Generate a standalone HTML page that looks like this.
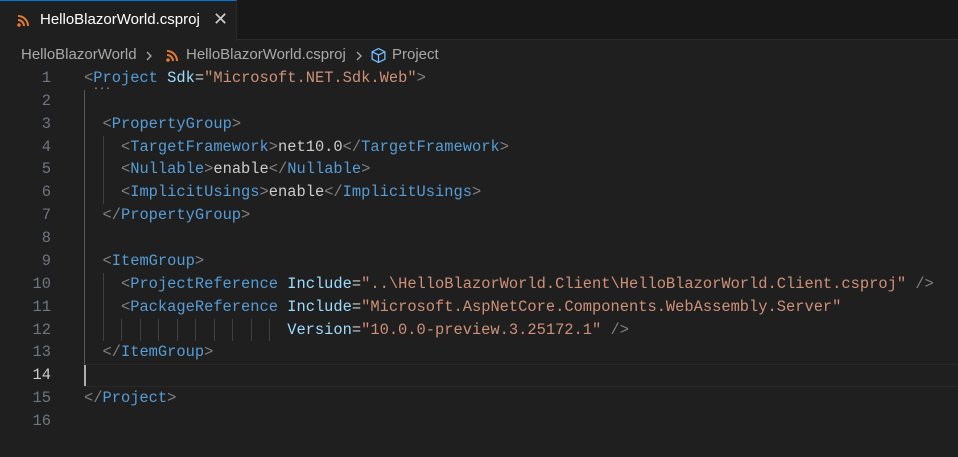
<!DOCTYPE html>
<html><head><meta charset="utf-8"><style>
body{margin:0;width:958px;height:457px;background:#1f1f1f;overflow:hidden;position:relative;font-family:"Liberation Sans",sans-serif}
.tabbar{position:absolute;left:0;top:0;width:958px;height:40px;background:#181818;border-bottom:1px solid #2b2b2b;box-sizing:border-box}
.tab{position:absolute;left:0;top:0;width:237px;height:41px;background:#1f1f1f;border-top:1px solid #0078d4;box-sizing:border-box;border-right:1px solid #2b2b2b}
.tab .t{position:absolute;left:40px;top:10px;color:#fff;font-size:15px}
.tab .x{position:absolute;left:213px;top:8px;color:#ccc;font-size:18px}
.bc{position:absolute;top:46px;color:#a9a9a9;font-size:15px;white-space:pre}
.code{position:absolute;left:0;top:67px;font-family:"Liberation Mono",monospace;font-size:15.4px}
.ln{position:absolute;left:0;width:51px;text-align:right;color:#6e7681;height:22.87px;line-height:22.87px}
.l{position:absolute;left:84px;white-space:pre;height:22.87px;line-height:22.87px;color:#cccccc}
.g{position:absolute;width:1px;background:#404040}
.p{color:#808080}.n{color:#569cd6}.a{color:#9cdcfe}.s{color:#ce9178}
</style></head><body>
<div class="tabbar"></div>
<div class="tab">
<svg style="position:absolute;left:17px;top:14px" width="12" height="12" viewBox="0 0 12 12"><circle cx="2" cy="10" r="1.8" fill="#e37933"/><path d="M1 5a6 6 0 0 1 6 6M1 1a10 10 0 0 1 10 10" stroke="#e37933" stroke-width="2" fill="none"/></svg>
<span class="t">HelloBlazorWorld.csproj</span><span class="x">✕</span></div>
<span class="bc" style="left:21px">HelloBlazorWorld</span>
<svg style="position:absolute;left:145px;top:50px" width="8" height="12" viewBox="0 0 8 12"><path d="M2 2l4 4-4 4" stroke="#a9a9a9" stroke-width="1.3" fill="none"/></svg>
<svg style="position:absolute;left:166px;top:50px" width="12" height="12" viewBox="0 0 12 12"><circle cx="2" cy="10" r="1.8" fill="#e37933"/><path d="M1 5a6 6 0 0 1 6 6M1 1a10 10 0 0 1 10 10" stroke="#e37933" stroke-width="2" fill="none"/></svg>
<span class="bc" style="left:186px">HelloBlazorWorld.csproj</span>
<svg style="position:absolute;left:355px;top:50px" width="8" height="12" viewBox="0 0 8 12"><path d="M2 2l4 4-4 4" stroke="#a9a9a9" stroke-width="1.3" fill="none"/></svg>
<svg style="position:absolute;left:370px;top:47px" width="17" height="17" viewBox="0 0 16 16"><path d="M8 1.5l6 3v7l-6 3-6-3v-7z M2 4.5l6 3 6-3 M8 7.5v7" stroke="#75beff" stroke-width="1.2" fill="none" stroke-linejoin="round"/></svg>
<span class="bc" style="left:392px">Project</span>
<div class="code">
<div style="position:absolute;left:84px;top:297.3px;width:874px;height:22.87px;box-sizing:border-box;border-top:1px solid #282828;border-bottom:1px solid #282828"></div>
<div class="g" style="left:84px;top:22.87px;height:274.4px;background:#585858"></div>
<div class="g" style="left:102.5px;top:68.6px;height:68.6px"></div>
<div class="g" style="left:102.5px;top:205.8px;height:68.6px"></div>
<div class="g" style="left:121px;top:251.6px;height:22.87px"></div>
<div class="g" style="left:139.5px;top:251.6px;height:22.87px"></div>
<div class="g" style="left:158px;top:251.6px;height:22.87px"></div>
<div class="g" style="left:176.5px;top:251.6px;height:22.87px"></div>
<div class="g" style="left:195px;top:251.6px;height:22.87px"></div>
<div class="g" style="left:213.5px;top:251.6px;height:22.87px"></div>
<div class="g" style="left:232px;top:251.6px;height:22.87px"></div>
<div class="g" style="left:250.5px;top:251.6px;height:22.87px"></div>
<div class="g" style="left:269px;top:251.6px;height:22.87px"></div>
<div class="ln" style="top:0">1</div><div class="l" style="top:0"><span class="p">&lt;</span><span class="n">Project</span> <span class="a">Sdk</span>=<span class="s">"Microsoft.NET.Sdk.Web"</span><span class="p">&gt;</span></div>
<div style="position:absolute;left:93px;top:17px;color:#aaa;font-size:10px;letter-spacing:0">···</div>
<div class="ln" style="top:22.87px">2</div>
<div class="ln" style="top:45.74px">3</div><div class="l" style="top:45.74px">  <span class="p">&lt;</span><span class="n">PropertyGroup</span><span class="p">&gt;</span></div>
<div class="ln" style="top:68.61px">4</div><div class="l" style="top:68.61px">    <span class="p">&lt;</span><span class="n">TargetFramework</span><span class="p">&gt;</span>net10.0<span class="p">&lt;/</span><span class="n">TargetFramework</span><span class="p">&gt;</span></div>
<div class="ln" style="top:91.48px">5</div><div class="l" style="top:91.48px">    <span class="p">&lt;</span><span class="n">Nullable</span><span class="p">&gt;</span>enable<span class="p">&lt;/</span><span class="n">Nullable</span><span class="p">&gt;</span></div>
<div class="ln" style="top:114.35px">6</div><div class="l" style="top:114.35px">    <span class="p">&lt;</span><span class="n">ImplicitUsings</span><span class="p">&gt;</span>enable<span class="p">&lt;/</span><span class="n">ImplicitUsings</span><span class="p">&gt;</span></div>
<div class="ln" style="top:137.22px">7</div><div class="l" style="top:137.22px">  <span class="p">&lt;/</span><span class="n">PropertyGroup</span><span class="p">&gt;</span></div>
<div class="ln" style="top:160.09px">8</div>
<div class="ln" style="top:182.96px">9</div><div class="l" style="top:182.96px">  <span class="p">&lt;</span><span class="n">ItemGroup</span><span class="p">&gt;</span></div>
<div class="ln" style="top:205.83px">10</div><div class="l" style="top:205.83px">    <span class="p">&lt;</span><span class="n">ProjectReference</span> <span class="a">Include</span>=<span class="s">"..\HelloBlazorWorld.Client\HelloBlazorWorld.Client.csproj"</span> <span class="p">/&gt;</span></div>
<div class="ln" style="top:228.7px">11</div><div class="l" style="top:228.7px">    <span class="p">&lt;</span><span class="n">PackageReference</span> <span class="a">Include</span>=<span class="s">"Microsoft.AspNetCore.Components.WebAssembly.Server"</span></div>
<div class="ln" style="top:251.57px">12</div><div class="l" style="top:251.57px">                      <span class="a">Version</span>=<span class="s">"10.0.0-preview.3.25172.1"</span> <span class="p">/&gt;</span></div>
<div class="ln" style="top:274.44px">13</div><div class="l" style="top:274.44px">  <span class="p">&lt;/</span><span class="n">ItemGroup</span><span class="p">&gt;</span></div>
<div class="ln" style="top:297.31px;color:#cccccc">14</div>
<div style="position:absolute;left:84px;top:298px;width:2px;height:21px;background:#aeafad"></div>
<div class="ln" style="top:320.18px">15</div><div class="l" style="top:320.18px"><span class="p">&lt;/</span><span class="n">Project</span><span class="p">&gt;</span></div>
<div class="ln" style="top:343.05px">16</div>
</div>
</body></html>
